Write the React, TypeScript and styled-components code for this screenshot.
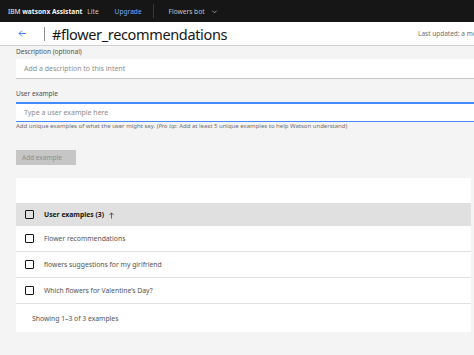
import React from 'react'
import styled, { createGlobalStyle } from 'styled-components'

const GlobalStyle = createGlobalStyle`
  html, body {
    margin: 0;
    padding: 0;
    background: #f4f4f4;
    font-family: "Noto Sans", "Open Sans", sans-serif;
    overflow: hidden;
  }
`

const Page = styled.div`
  width: 474px;
  height: 355px;
  display: flex;
  flex-direction: column;
  background: #f4f4f4;
  overflow: hidden;
`

const TopBar = styled.div`
  height: 22px;
  background: #161616;
  display: flex;
  align-items: center;
  padding-left: 8px;
  color: #f4f4f4;
  font-size: 6.6px;
  flex-shrink: 0;
`

const Brand = styled.span`
  white-space: nowrap;
  b {
    font-weight: 700;
  }
`

const Plan = styled.span`
  margin-left: 5px;
  color: #c6c6c6;
`

const Upgrade = styled.span`
  margin-left: 16px;
  color: #78a9ff;
`

const Divider = styled.span`
  width: 1px;
  height: 14px;
  background: #393939;
  margin: 0 15px 0 11px;
`

const BotName = styled.span`
  display: flex;
  align-items: center;
  gap: 6px;
  color: #c6c6c6;
`

const Header = styled.div`
  height: 23px;
  background: #fff;
  border-bottom: 1px solid #d0d0d0;
  display: flex;
  align-items: center;
  padding-left: 18px;
  flex-shrink: 0;
`

const BackButton = styled.span`
  display: flex;
  align-items: center;
  color: #0f62fe;
`

const HeaderDivider = styled.span`
  width: 1px;
  height: 14px;
  background: #8d8d8d;
  margin: 0 7px 0 17px;
`

const Title = styled.h1`
  margin: 0;
  font-size: 14.5px;
  font-weight: 400;
  color: #161616;
  white-space: nowrap;
  letter-spacing: -0.35px;
`

const Updated = styled.span`
  margin-left: auto;
  font-size: 6.5px;
  color: #6f6f6f;
  white-space: nowrap;
  width: 56px;
  overflow: hidden;
`

const Main = styled.div`
  display: flex;
  flex-direction: column;
  padding: 2px 0 0 16px;
`

const Label = styled.label<{ $gap?: number }>`
  font-size: 6.5px;
  line-height: 8px;
  color: #525252;
  margin-top: ${(p) => p.$gap ?? 0}px;
`

const TextField = styled.div<{ $focused?: boolean }>`
  height: 20px;
  box-sizing: border-box;
  margin-top: ${(p) => (p.$focused ? 4 : 3)}px;
  background: #fff;
  border-bottom: 1px solid ${(p) => (p.$focused ? '#4589ff' : '#c6c6c6')};
  border-top: ${(p) => (p.$focused ? '2px solid #4589ff' : 'none')};
  display: flex;
  align-items: center;
  padding-left: 8px;
  font-size: 7px;
  color: #8d8d8d;
`

const Helper = styled.div`
  font-size: 6px;
  line-height: 8px;
  color: #6f6f6f;
  white-space: nowrap;
  i {
    font-style: italic;
  }
`

const AddButton = styled.div`
  width: 60px;
  height: 15px;
  margin-top: 20px;
  background: #c6c6c6;
  color: #8d8d8d;
  font-size: 6.5px;
  display: flex;
  align-items: center;
  padding-left: 6px;
  box-sizing: border-box;
`

const Table = styled.div`
  margin-top: 13px;
  width: 455px;
  background: #fff;
  display: flex;
  flex-direction: column;
`

const Toolbar = styled.div`
  height: 25px;
`

const Row = styled.div<{ $head?: boolean }>`
  height: ${(p) => (p.$head ? 23 : 26)}px;
  box-sizing: border-box;
  display: flex;
  align-items: center;
  padding-left: 9px;
  gap: 10px;
  background: ${(p) => (p.$head ? '#e0e0e0' : '#fff')};
  border-bottom: ${(p) => (p.$head ? 'none' : '1px solid #e0e0e0')};
  font-size: 6.8px;
  font-weight: ${(p) => (p.$head ? 700 : 400)};
  color: ${(p) => (p.$head ? '#161616' : '#525252')};
`

const Checkbox = styled.span`
  width: 7px;
  height: 7px;
  border: 1px solid #161616;
  border-radius: 1px;
  flex-shrink: 0;
`

const SortArrow = styled.span`
  display: inline-flex;
  margin-left: 4px;
  vertical-align: middle;
`

const Footer = styled.div`
  height: 28px;
  display: flex;
  align-items: center;
  padding-left: 16px;
  font-size: 6.8px;
  color: #525252;
`

const examples = [
  'Flower recommendations',
  'flowers suggestions for my girlfriend',
  'Which flowers for Valentine’s Day?',
]

export default function App() {
  return (
    <Page>
      <GlobalStyle />
      <TopBar>
        <Brand>
          IBM <b>watsonx Assistant</b>
        </Brand>
        <Plan>Lite</Plan>
        <Upgrade>Upgrade</Upgrade>
        <Divider />
        <BotName>
          Flowers bot
          <svg width="7" height="7" viewBox="0 0 16 16" fill="none" stroke="#c6c6c6" strokeWidth="1.6">
            <path d="M3 6l5 5 5-5" />
          </svg>
        </BotName>
      </TopBar>
      <Header>
        <BackButton>
          <svg width="9" height="9" viewBox="0 0 16 16" fill="none" stroke="#0f62fe" strokeWidth="1.4">
            <path d="M14 8H2M7 3L2 8l5 5" />
          </svg>
        </BackButton>
        <HeaderDivider />
        <Title>#flower_recommendations</Title>
        <Updated>Last updated: a moment ago</Updated>
      </Header>
      <Main>
        <Label $gap={0}>Description (optional)</Label>
        <TextField>Add a description to this intent</TextField>
        <Label $gap={11}>User example</Label>
        <TextField $focused>Type a user example here</TextField>
        <Helper>
          Add unique examples of what the user might say. (<i>Pro tip:</i> Add at least 5 unique examples to help
          Watson understand)
        </Helper>
        <AddButton>Add example</AddButton>
        <Table>
          <Toolbar />
          <Row $head>
            <Checkbox />
            <span>
              User examples (3)
              <SortArrow>
                <svg width="7" height="7" viewBox="0 0 16 16" fill="none" stroke="#161616" strokeWidth="1.4">
                  <path d="M8 15V2M3 7l5-5 5 5" />
                </svg>
              </SortArrow>
            </span>
          </Row>
          {examples.map((e) => (
            <Row key={e}>
              <Checkbox />
              <span>{e}</span>
            </Row>
          ))}
          <Footer>Showing 1–3 of 3 examples</Footer>
        </Table>
      </Main>
    </Page>
  )
}
